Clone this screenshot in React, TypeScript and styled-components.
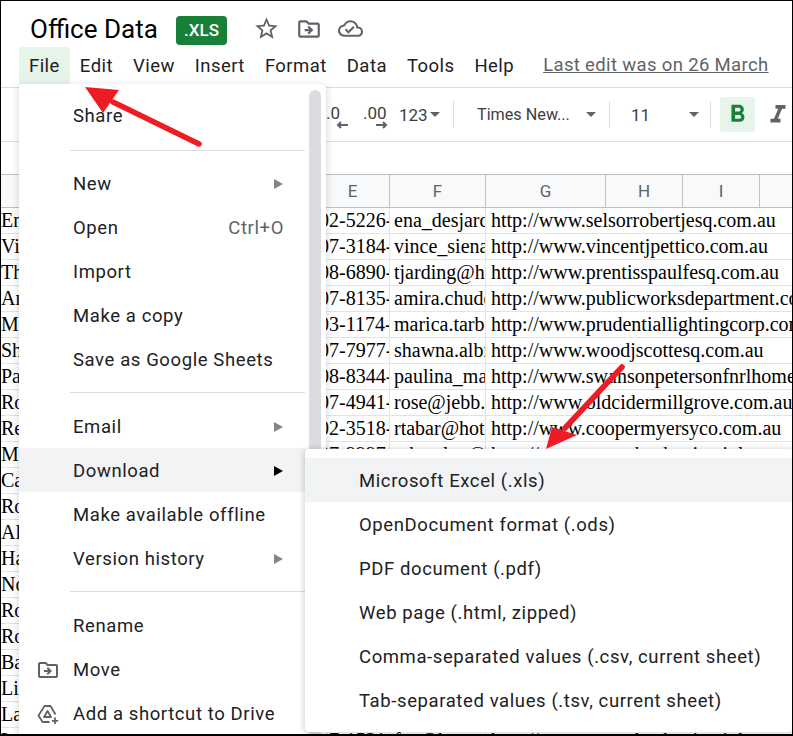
import styled, { createGlobalStyle } from 'styled-components'
import {
  MdStarBorder,
  MdOutlineDriveFileMove,
  MdOutlineCloudDone,
  MdFormatBold,
  MdFormatItalic,
} from 'react-icons/md'

const GlobalStyle = createGlobalStyle`
  html, body {
    margin: 0;
    padding: 0;
    background: #fff;
  }
  * {
    box-sizing: border-box;
  }
`

const Frame = styled.div`
  position: relative;
  width: 793px;
  height: 736px;
  overflow: hidden;
  background: #fff;
  border: solid #000;
  border-width: 1px 1px 2px 1px;
  font-family: Roboto, 'Liberation Sans', sans-serif;
  color: #202124;
`

const TitleRow = styled.div`
  display: flex;
  align-items: center;
  height: 46px;
  padding: 12px 0 0 29px;
`

const DocTitle = styled.div`
  font-size: 26px;
  line-height: 30px;
  color: #000;
  width: 146px;
  margin-bottom: 3px;
`

const Badge = styled.div`
  width: 51px;
  height: 29px;
  border-radius: 4px;
  background: #188038;
  color: #fff;
  font-size: 17px;
  font-weight: 500;
  display: flex;
  align-items: center;
  justify-content: center;
`

const TitleIcons = styled.div`
  display: flex;
  align-items: center;
  gap: 16px;
  margin: 0 0 3px 26px;
  color: #5f6368;

  svg {
    display: block;
  }
`

const MenuBar = styled.div`
  display: flex;
  align-items: stretch;
  height: 41px;
  padding-left: 18px;
  border-bottom: 1px solid #dadce0;
`

const MenuTab = styled.div<{ $open?: boolean }>`
  padding: 0 10px;
  height: 37px;
  line-height: 39px;
  font-size: 18.5px;
  letter-spacing: 0.45px;
  border-radius: 4px 4px 0 0;
  background: ${(p) => (p.$open ? '#e6f4ea' : 'transparent')};
`

const LastEdit = styled.div`
  margin-left: 19px;
  height: 35px;
  line-height: 37px;
  font-size: 18.5px;
  letter-spacing: 0.35px;
  color: #5f6368;
  text-decoration: underline;
`

const Toolbar = styled.div`
  display: flex;
  align-items: center;
  height: 54px;
  padding-left: 325px;
  border-bottom: 1px solid #dadce0;
  color: #3c4043;
`

const DecimalTool = styled.div<{ $w: number }>`
  position: relative;
  width: ${(p) => p.$w}px;
  height: 34px;
  line-height: 30px;
  font-size: 17px;
  flex: none;
`

const DecimalArrow = styled.svg<{ $right: number; $flip?: boolean }>`
  position: absolute;
  top: 23px;
  right: ${(p) => p.$right}px;
  transform: ${(p) => (p.$flip ? 'scaleX(-1)' : 'none')};
`

const Caret = styled.span`
  display: inline-block;
  width: 0;
  height: 0;
  flex: none;
  border-left: 5px solid transparent;
  border-right: 5px solid transparent;
  border-top: 5px solid #5f6368;
`

const ToolLabel = styled.div<{ $w: number; $size?: number }>`
  width: ${(p) => p.$w}px;
  flex: none;
  font-size: ${(p) => p.$size ?? 17}px;
  white-space: nowrap;
`

const ToolSep = styled.div<{ $l: number; $r: number }>`
  width: 1px;
  height: 27px;
  flex: none;
  background: #dadce0;
  margin: 0 ${(p) => p.$r}px 0 ${(p) => p.$l}px;
`

const BoldButton = styled.div`
  width: 35px;
  height: 35px;
  flex: none;
  border-radius: 3px;
  background: #e6f4ea;
  color: #188038;
  display: flex;
  align-items: center;
  justify-content: center;
`

const ItalicIcon = styled.div`
  margin-left: 8px;
  color: #5f6368;
  display: flex;
`

const FormulaBar = styled.div`
  height: 32px;
`

const ColumnHeader = styled.div`
  display: grid;
  grid-template-columns: 315px 74px 96px 120px 77px 77px 1fr;
  height: 34px;
  background: #f8f9fa;
  border-top: 1px solid #c0c0c0;
  border-bottom: 1px solid #c0c0c0;
`

const ColumnName = styled.div`
  display: flex;
  align-items: center;
  justify-content: center;
  border-right: 1px solid #c0c0c0;
  color: #5f6368;
  font-size: 17px;

  &:last-child {
    border-right: none;
  }
`

const SheetRow = styled.div`
  display: grid;
  grid-template-columns: 315px 74px 96px 1fr;
  height: 26px;
  border-bottom: 1px solid #e2e3e3;
  font-family: 'Liberation Serif', 'Times New Roman', serif;
  font-size: 20px;
  line-height: 24px;
  color: #000;
`

const Cell = styled.div<{ $pad: number }>`
  padding-left: ${(p) => p.$pad}px;
  white-space: nowrap;
  overflow: hidden;
  border-right: 1px solid #e2e3e3;

  &:last-child {
    border-right: none;
  }
`

const FileMenu = styled.div`
  position: absolute;
  left: 18px;
  top: 83px;
  width: 307px;
  height: 660px;
  padding: 9px 21px 0 0;
  background: #fff;
  border-radius: 5px 5px 0 0;
  box-shadow: 0 2px 6px 2px rgba(60, 64, 67, 0.15);
`

const ScrollThumb = styled.div`
  position: absolute;
  top: 6px;
  right: 5px;
  width: 12px;
  height: 660px;
  border-radius: 6px;
  background: #dadce0;
`

const MenuItem = styled.div<{ $active?: boolean }>`
  position: relative;
  display: flex;
  align-items: center;
  justify-content: space-between;
  height: 44px;
  padding: 2px 22px 0 54px;
  font-size: 18.5px;
  letter-spacing: 0.6px;
  white-space: nowrap;
  background: ${(p) => (p.$active ? '#f1f3f4' : 'transparent')};
`

const Shortcut = styled.span`
  color: #5f6368;
  margin-right: -1px;
`

const SubCaret = styled.span<{ $active?: boolean }>`
  width: 0;
  height: 0;
  border-top: 5px solid transparent;
  border-bottom: 5px solid transparent;
  border-left: 9px solid ${(p) => (p.$active ? '#000' : '#80868b')};
`

const ItemIcon = styled.span`
  position: absolute;
  left: 17px;
  top: 11px;
  color: #5f6368;
  font-size: 24px;
  display: flex;
`

const MenuDivider = styled.div<{ $first?: boolean }>`
  height: 1px;
  margin: ${(p) => (p.$first ? 13 : 11)}px 0 ${(p) => (p.$first ? 10 : 11)}px 51px;
  background: #dadce0;
`

const DownloadMenu = styled.div`
  position: absolute;
  left: 304px;
  top: 448px;
  width: 488px;
  height: 283px;
  padding-top: 9px;
  background: #fff;
  border-radius: 5px;
  box-shadow: 0 1px 5px 2px rgba(60, 64, 67, 0.18);
`

const ArrowLayer = styled.svg`
  position: absolute;
  left: -1px;
  top: -1px;
  pointer-events: none;
`

type SheetData = [string, string, string, string]

const sheetRows: SheetData[] = [
  ['Ena Desjardins', '02-5226-', 'ena_desjardins@', 'http://www.selsorrobertjesq.com.au'],
  ['Vince Siena', '07-3184-', 'vince_siena@', 'http://www.vincentjpettico.com.au'],
  ['Theron Jarding', '08-6890-', 'tjarding@hotmail', 'http://www.prentisspaulfesq.com.au'],
  ['Amira Chudej', '07-8135-', 'amira.chudej@', 'http://www.publicworksdepartment.com.au'],
  ['Marica Tarbor', '03-1174-', 'marica.tarbor@', 'http://www.prudentiallightingcorp.com.au'],
  ['Shawna Albrough', '07-7977-', 'shawna.albrough@', 'http://www.woodjscottesq.com.au'],
  ['Paulina Maker', '08-8344-', 'paulina_maker@', 'http://www.swansonpetersonfnrlhome.com.au'],
  ['Rose Jebb', '07-4941-', 'rose@jebb.net', 'http://www.oldcidermillgrove.com.au'],
  ['Reita Tabar', '02-3518-', 'rtabar@hotmail', 'http://www.coopermyersyco.com.au'],
  ['Maybelle Bewley', '07-9997-', 'mbewley@hotmail', 'http://www.mcmahanbenjaminlaw.com.au'],
  ['Camellia Pylant', '', '', ''],
  ['Roy Nicolozakes', '', '', ''],
  ['Alesia Hixenbaugh', '', '', ''],
  ['Hal Mastrogiovanni', '', '', ''],
  ['Noah Kalafatis', '', '', ''],
  ['Rosio Cork', '', '', ''],
  ['Rory Papasergi', '', '', ''],
  ['Barbra Adkin', '', '', ''],
  ['Lindsey Dilello', '', '', ''],
  ['Lashawna Albrough', '', '', ''],
  ['Lauran Burnard', '07-1521-', 'fax@hotmail', 'http://www.mcmahanbenjaminlaw.com.au'],
]

const columns = ['', 'E', 'F', 'G', 'H', 'I', '']

const downloads = [
  'Microsoft Excel (.xls)',
  'OpenDocument format (.ods)',
  'PDF document (.pdf)',
  'Web page (.html, zipped)',
  'Comma-separated values (.csv, current sheet)',
  'Tab-separated values (.tsv, current sheet)',
]

function ShortcutIcon() {
  return (
    <svg width="24" height="24" viewBox="0 0 24 24" fill="none" stroke="currentColor" strokeWidth="1.8">
      <path d="M13.5 20H6.5L2.5 13.5L8.5 4H14.5L19.5 12.5" strokeLinejoin="round" />
      <path d="M11.5 9L8 15H15Z" strokeLinejoin="round" />
      <path d="M19 15.5V22M15.8 18.8H22.2" />
    </svg>
  )
}

function SmallArrow({ right, flip }: { right: number; flip?: boolean }) {
  return (
    <DecimalArrow $right={right} $flip={flip} width="12" height="8" viewBox="0 0 12 8" fill="none" stroke="#5f6368" strokeWidth="2">
      <path d="M0 4H10M7 1L10 4L7 7" />
    </DecimalArrow>
  )
}

export default function App() {
  return (
    <Frame>
      <GlobalStyle />
      <TitleRow>
        <DocTitle>Office Data</DocTitle>
        <Badge>.XLS</Badge>
        <TitleIcons>
          <MdStarBorder size={27} />
          <MdOutlineDriveFileMove size={26} />
          <MdOutlineCloudDone size={25} />
        </TitleIcons>
      </TitleRow>

      <MenuBar>
        <MenuTab $open>File</MenuTab>
        <MenuTab>Edit</MenuTab>
        <MenuTab>View</MenuTab>
        <MenuTab>Insert</MenuTab>
        <MenuTab>Format</MenuTab>
        <MenuTab>Data</MenuTab>
        <MenuTab>Tools</MenuTab>
        <MenuTab>Help</MenuTab>
        <LastEdit>Last edit was on 26 March</LastEdit>
      </MenuBar>

      <Toolbar>
        <DecimalTool $w={37}>
          .0
          <SmallArrow right={15} flip />
        </DecimalTool>
        <DecimalTool $w={36}>
          .00
          <SmallArrow right={11} />
        </DecimalTool>
        <ToolLabel $w={31}>123</ToolLabel>
        <Caret />
        <ToolSep $l={13} $r={23} />
        <ToolLabel $w={109} $size={16.2}>
          Times New...
        </ToolLabel>
        <Caret />
        <ToolSep $l={13} $r={21} />
        <ToolLabel $w={58}>11</ToolLabel>
        <Caret />
        <ToolSep $l={11} $r={9} />
        <BoldButton>
          <MdFormatBold size={29} />
        </BoldButton>
        <ItalicIcon>
          <MdFormatItalic size={30} />
        </ItalicIcon>
      </Toolbar>

      <FormulaBar />

      <ColumnHeader>
        {columns.map((name, i) => (
          <ColumnName key={i}>{name}</ColumnName>
        ))}
      </ColumnHeader>

      {sheetRows.map((row) => (
        <SheetRow key={row[0]}>
          <Cell $pad={0}>{row[0]}</Cell>
          <Cell $pad={3}>{row[1]}</Cell>
          <Cell $pad={4}>{row[2]}</Cell>
          <Cell $pad={5}>{row[3]}</Cell>
        </SheetRow>
      ))}

      <FileMenu>
        <ScrollThumb />
        <MenuItem>Share</MenuItem>
        <MenuDivider $first />
        <MenuItem>
          New
          <SubCaret />
        </MenuItem>
        <MenuItem>
          Open
          <Shortcut>Ctrl+O</Shortcut>
        </MenuItem>
        <MenuItem>Import</MenuItem>
        <MenuItem>Make a copy</MenuItem>
        <MenuItem>Save as Google Sheets</MenuItem>
        <MenuDivider />
        <MenuItem>
          Email
          <SubCaret />
        </MenuItem>
        <MenuItem $active>
          Download
          <SubCaret $active />
        </MenuItem>
        <MenuItem>Make available offline</MenuItem>
        <MenuItem>
          Version history
          <SubCaret />
        </MenuItem>
        <MenuDivider />
        <MenuItem>Rename</MenuItem>
        <MenuItem>
          <ItemIcon>
            <MdOutlineDriveFileMove />
          </ItemIcon>
          Move
        </MenuItem>
        <MenuItem>
          <ItemIcon>
            <ShortcutIcon />
          </ItemIcon>
          Add a shortcut to Drive
        </MenuItem>
      </FileMenu>

      <DownloadMenu>
        {downloads.map((label, i) => (
          <MenuItem key={label} $active={i === 0}>
            {label}
          </MenuItem>
        ))}
      </DownloadMenu>

      <ArrowLayer width="793" height="736" viewBox="0 0 793 736">
        <path d="M199 144 L113 102" stroke="#ed1c24" strokeWidth="5.5" strokeLinecap="round" />
        <polygon points="85,87 119,90 103,113" fill="#ed1c24" />
        <path d="M622 367 L565 428" stroke="#ed1c24" strokeWidth="5.5" strokeLinecap="round" />
        <polygon points="546,449 552,427 577,435" fill="#ed1c24" />
      </ArrowLayer>
    </Frame>
  )
}
